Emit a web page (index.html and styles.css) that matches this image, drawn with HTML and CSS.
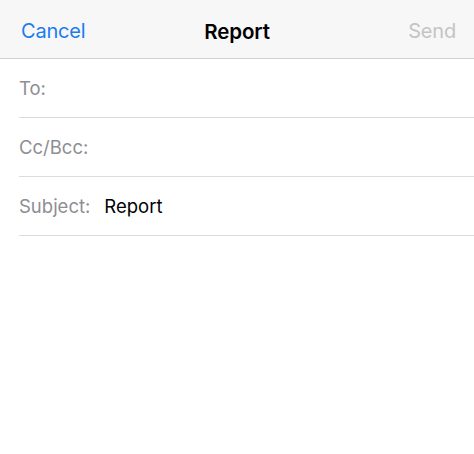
FILE: index.html
```html
<!DOCTYPE html>
<html>
<head>
<meta charset="utf-8">
<link rel="stylesheet" href="styles.css">
</head>
<body>
<div class="nav">
  <span class="nav-btn cancel">Cancel</span>
  <span class="nav-title">Report</span>
  <span class="nav-btn send">Send</span>
</div>
<div class="fields">
  <div class="row"><span class="label">To:</span></div>
  <div class="row"><span class="label">Cc/Bcc:</span></div>
  <div class="row"><span class="label">Subject:</span><span class="value">Report</span></div>
</div>
</body>
</html>
```
FILE: styles.css
```css
html, body {
  margin: 0;
  padding: 0;
  background: #ffffff;
  font-family: "Inter", "Roboto", "Liberation Sans", sans-serif;
}
.nav {
  box-sizing: border-box;
  height: 59px;
  background: #f7f7f7;
  border-bottom: 1px solid #d2d2d4;
  display: flex;
  align-items: center;
  justify-content: space-between;
  padding: 4px 18px 0 21px;
  position: relative;
}
.nav-btn {
  font-size: 20px;
  letter-spacing: -0.2px;
}
.cancel { color: #1b7cf0; }
.send { color: #c4c4c6; }
.nav-title {
  position: absolute;
  left: 0;
  right: 0;
  top: 4px;
  bottom: 0;
  display: flex;
  align-items: center;
  justify-content: center;
  font-size: 20.5px;
  font-weight: 600;
  color: #000;
  letter-spacing: -0.1px;
  pointer-events: none;
}
.fields {
  padding-left: 19px;
}
.row {
  height: 58px;
  border-bottom: 1px solid #dcdcde;
  display: flex;
  align-items: center;
  font-size: 18.5px;
}
.label {
  color: #8e8e93;
}
.value {
  color: #000;
  margin-left: 14px;
}
```
